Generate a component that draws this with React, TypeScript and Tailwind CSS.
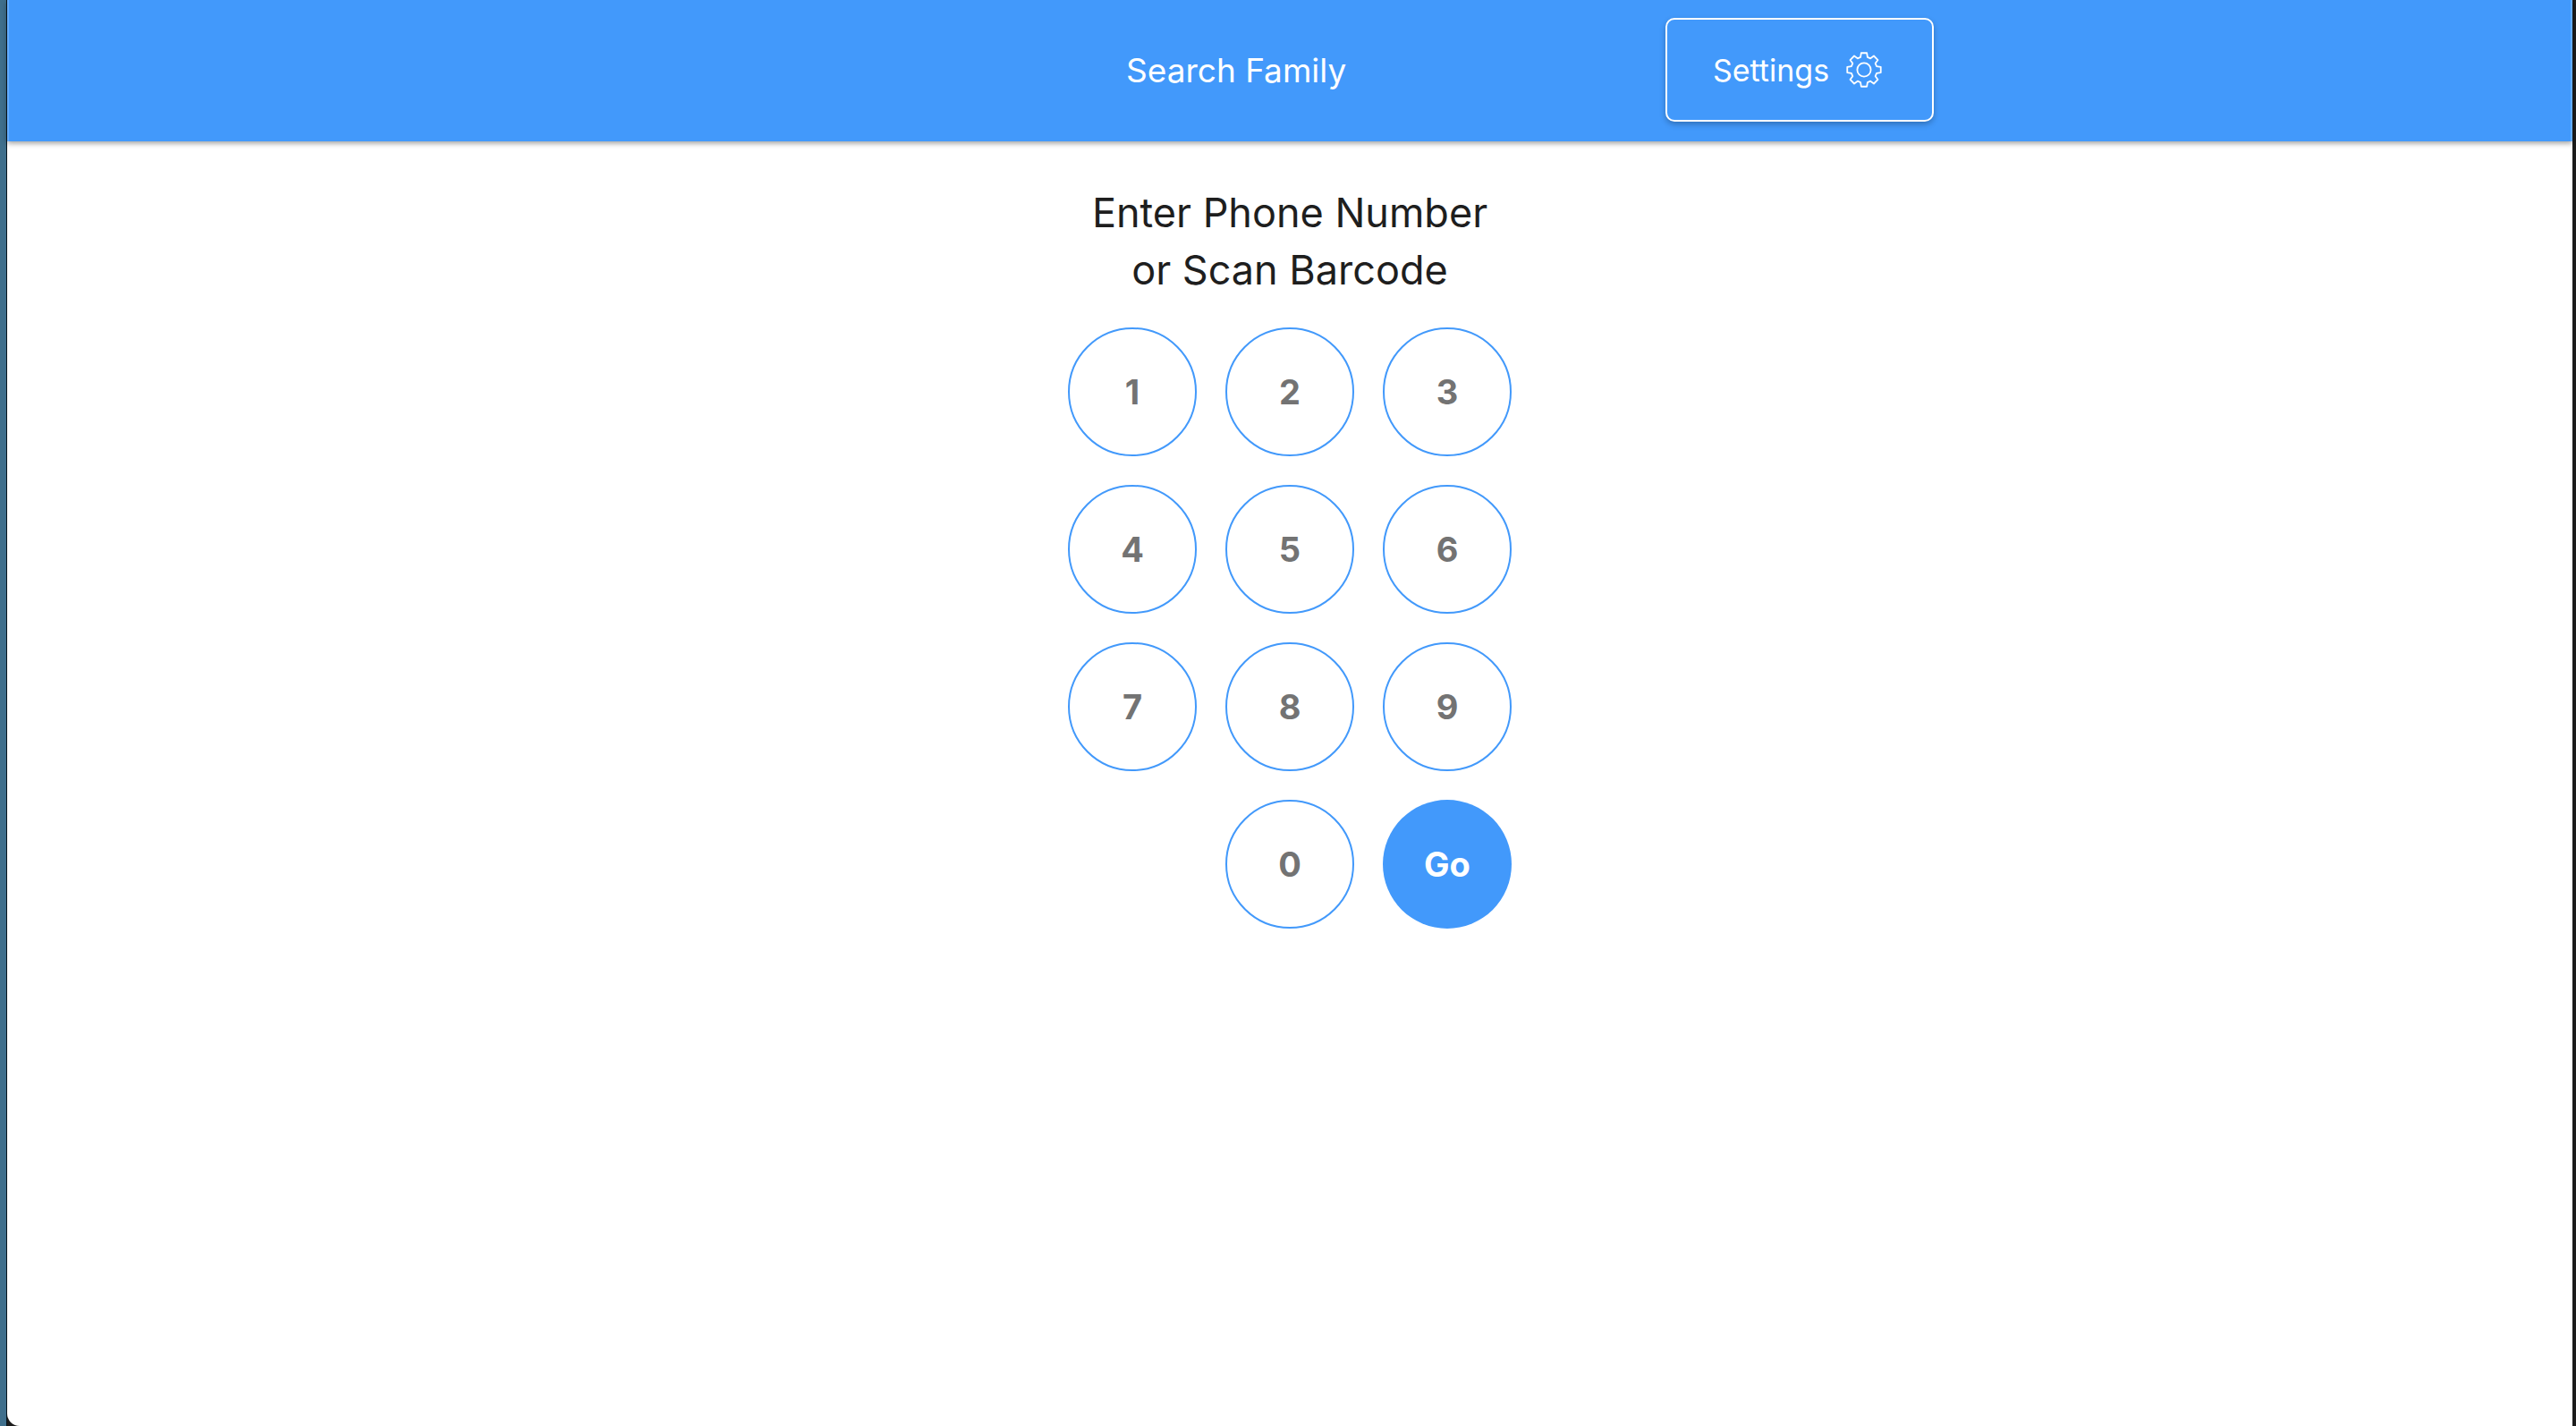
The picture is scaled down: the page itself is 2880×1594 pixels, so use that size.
const digits = ["1", "2", "3", "4", "5", "6", "7", "8", "9"];

// 8 tooth gear outline, one tooth pointing straight up
function gearPath() {
  const pts: string[] = [];
  for (let i = 0; i < 8; i++) {
    const a = (i * Math.PI) / 4 - Math.PI / 2;
    const at = (r: number, off: number) =>
      `${(20 + r * Math.cos(a + off)).toFixed(2)} ${(20 + r * Math.sin(a + off)).toFixed(2)}`;
    pts.push(at(14.6, -0.27), at(19, -0.17), at(19, 0.17), at(14.6, 0.27));
  }
  return "M" + pts.join("L") + "Z";
}

function Gear() {
  return (
    <svg width="40" height="40" viewBox="0 0 40 40" fill="none" stroke="white" strokeWidth="1.8" strokeLinejoin="round">
      <path d={gearPath()} />
      <circle cx="20" cy="20" r="7.6" />
    </svg>
  );
}

function Key({ label }: { label: string }) {
  return (
    <button className="w-[144px] h-[144px] rounded-full border-2 border-[#4299fb] bg-white text-[38px] font-bold text-[#737373] flex items-center justify-center">
      {label}
    </button>
  );
}

export default function App() {
  return (
    <div className="h-[1594px] w-[2880px] overflow-hidden bg-[#1c1c1c] font-['Inter',sans-serif]">
      <div className="flex h-full">
        {/* window edge on the left */}
        <div className="w-[7px] bg-[#3f6f8c]" />
        <div className="w-px bg-[#06141c]" />
        <div className="flex flex-1 flex-col bg-white rounded-bl-[14px]">
          <header className="h-[158px] flex items-center bg-[#4299fb] border-x-2 border-[#64acfc] pl-[1249px] shadow-[0_2px_6px_rgba(0,0,0,0.4)]">
            <h1 className="w-[603px] text-[37px] font-normal text-white">Search Family</h1>
            <button className="w-[300px] h-[116px] mb-[2px] flex items-center justify-center gap-[19px] rounded-[10px] border-2 border-white bg-[#4299fb] pr-[5px] text-[34px] text-white shadow-[0_3px_6px_rgba(0,0,0,0.25)]">
              Settings
              <Gear />
            </button>
          </header>
          <main className="flex flex-col items-center pt-[48px]">
            <p className="text-center text-[45px] leading-[64px] text-[#1e1e1e]">
              Enter Phone Number
              <br />
              or Scan Barcode
            </p>
            <div className="mt-[32px] grid grid-cols-3 gap-[32px]">
              {digits.map((d) => (
                <Key key={d} label={d} />
              ))}
              <div />
              <Key label="0" />
              <button className="w-[144px] h-[144px] rounded-full bg-[#4299fb] text-[38px] font-bold text-white">Go</button>
            </div>
          </main>
        </div>
        <div className="w-[4px]" />
      </div>
    </div>
  );
}
